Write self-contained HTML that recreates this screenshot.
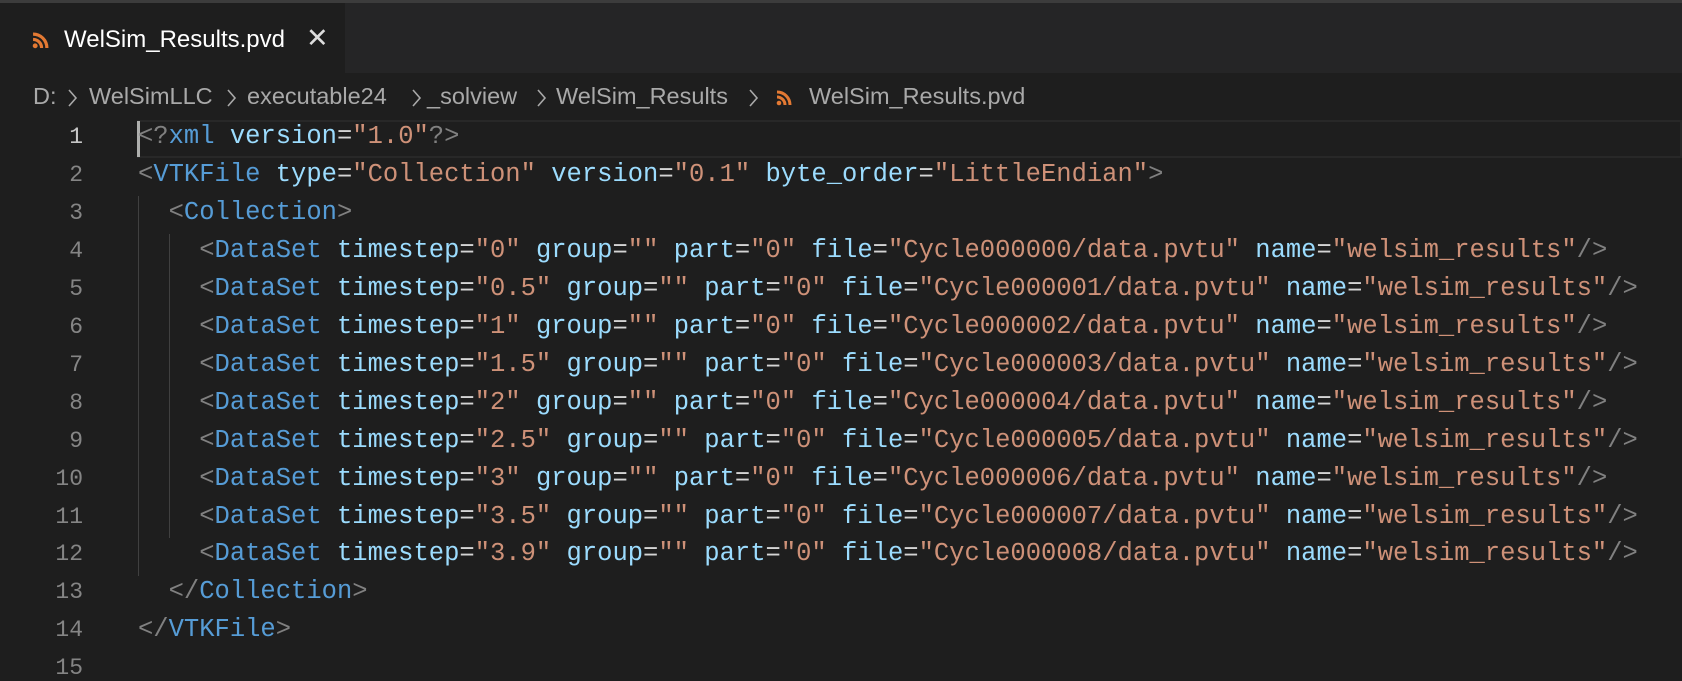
<!DOCTYPE html>
<html><head><meta charset="utf-8"><style>
*{margin:0;padding:0;box-sizing:border-box}
body{width:1682px;height:678px;background:#1e1e1e;overflow:hidden;position:relative;font-family:"Liberation Sans",sans-serif}
.top{position:absolute;left:0;top:0;width:1682px;height:3px;background:#3c3c3c}
.tabbar{position:absolute;left:0;top:3px;width:1682px;height:70px;background:#252526}
.tab{position:absolute;left:0;top:3px;width:345px;height:70px;background:#1e1e1e;color:#fff;font-size:24px}
.tab .t{position:absolute;left:64px;top:23px}
.tab .x{position:absolute;left:306px;top:20px;font-size:27px;color:#ddd}
.cr{position:absolute;top:83px;color:#a9a9a9;font-size:23.5px;white-space:pre}
.ln{position:absolute;left:0;width:83px;text-align:right;color:#858585;font-family:"Liberation Mono",monospace;font-size:23px}
.code{position:absolute;left:138px;font-family:"Liberation Mono",monospace;font-size:25.5px;white-space:pre;color:#d4d4d4}
.b{color:#808080}.n{color:#569cd6}.a{color:#9cdcfe}.s{color:#ce9178}
.guide{position:absolute;width:1px;background:#404040}
</style></head><body>
<div class="top"></div><div class="tabbar"></div>
<div class="tab">
<svg style="position:absolute;left:32px;top:29px" width="17" height="17" viewBox="0 0 16 16"><circle cx="3" cy="13" r="2.3" fill="#e37933"/><path d="M1 7a8 8 0 0 1 8 8M1 2a13 13 0 0 1 13 13" stroke="#e37933" stroke-width="3" fill="none"/></svg>
<span class="t">WelSim_Results.pvd</span><span class="x">✕</span></div>
<div id="cr"></div>
<svg style="position:absolute;left:776px;top:90px" width="16" height="16" viewBox="0 0 16 16"><circle cx="3" cy="13" r="2.3" fill="#e37933"/><path d="M1 7a8 8 0 0 1 8 8M1 2a13 13 0 0 1 13 13" stroke="#e37933" stroke-width="3" fill="none"/></svg>
<div style="position:absolute;left:137px;top:120px;width:1545px;height:38px;border:2px solid #282828"></div>
<div style="position:absolute;left:137px;top:121px;width:3px;height:36px;background:#aeafad"></div>
<div class="guide" style="left:138px;top:196px;height:380px"></div>
<div class="guide" style="left:169px;top:234px;height:304px"></div>
<div id="c"></div>
<script>
var items=[["D:",33],["WelSimLLC",89],["executable24",247],["_solview",427],["WelSim_Results",556],["WelSim_Results.pvd",809]];
var ch=[67,226,411,536,748];
var h='';
items.forEach(function(it){h+='<div class="cr" style="left:'+it[1]+'px">'+it[0]+'</div>'});
ch.forEach(function(x){h+='<svg style="position:absolute;left:'+x+'px;top:87px" width="12" height="22" viewBox="0 0 12 22"><path d="M2 3l7 8-7 8" stroke="#a9a9a9" stroke-width="1.6" fill="none"/></svg>'});
document.getElementById('cr').innerHTML=h;
var L=[
'<span class="b">&lt;?</span><span class="n">xml</span> <span class="a">version</span>=<span class="s">"1.0"</span><span class="b">?&gt;</span>',
'<span class="b">&lt;</span><span class="n">VTKFile</span> <span class="a">type</span>=<span class="s">"Collection"</span> <span class="a">version</span>=<span class="s">"0.1"</span> <span class="a">byte_order</span>=<span class="s">"LittleEndian"</span><span class="b">&gt;</span>',
'  <span class="b">&lt;</span><span class="n">Collection</span><span class="b">&gt;</span>'];
var ts=["0","0.5","1","1.5","2","2.5","3","3.5","3.9"];
ts.forEach(function(t,i){L.push('    <span class="b">&lt;</span><span class="n">DataSet</span> <span class="a">timestep</span>=<span class="s">"'+t+'"</span> <span class="a">group</span>=<span class="s">""</span> <span class="a">part</span>=<span class="s">"0"</span> <span class="a">file</span>=<span class="s">"Cycle00000'+i+'/data.pvtu"</span> <span class="a">name</span>=<span class="s">"welsim_results"</span><span class="b">/&gt;</span>')});
L.push('  <span class="b">&lt;/</span><span class="n">Collection</span><span class="b">&gt;</span>');
L.push('<span class="b">&lt;/</span><span class="n">VTKFile</span><span class="b">&gt;</span>');
L.push('');
h='';
for(var i=0;i<15;i++){var y=122+i*37.95;
h+='<div class="ln" style="top:'+(y+2)+'px;'+(i==0?'color:#c6c6c6':'')+'">'+(i+1)+'</div><div class="code" style="top:'+y+'px">'+L[i]+'</div>';}
document.getElementById('c').innerHTML=h;
</script>
</body></html>
